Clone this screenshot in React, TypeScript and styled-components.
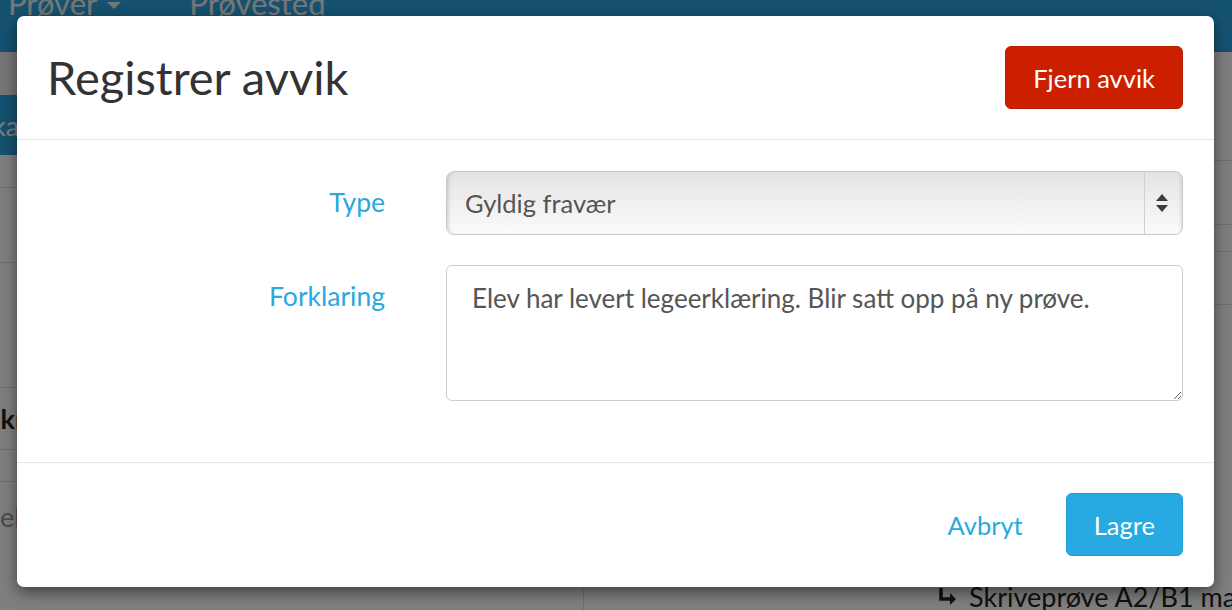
import * as React from "react";
import styled, { createGlobalStyle } from "styled-components";

const GlobalStyle = createGlobalStyle`
  html, body {
    margin: 0;
    padding: 0;
  }
  body {
    font-family: Lato, "Open Sans", "Liberation Sans", sans-serif;
    background: #fff;
    overflow: hidden;
  }
  * {
    box-sizing: border-box;
  }
`;

/* ---------- page behind the dialog ---------- */

const Page = styled.div`
  position: relative;
  width: 1232px;
  height: 610px;
  overflow: hidden;
  background: #fff;
  color: #222;
`;

const NavBar = styled.div`
  height: 52px;
  background: #2aa5e0;
  display: flex;
  align-items: flex-start;
  gap: 68px;
  padding-left: 8px;
`;

const NavItem = styled.div`
  color: #eee;
  font-size: 31px;
  line-height: 1;
  margin-top: -12px;
  display: flex;
  align-items: center;
  gap: 10px;
`;

const Caret = styled.span`
  display: inline-block;
  width: 0;
  height: 0;
  margin-top: 4px;
  border-left: 7px solid transparent;
  border-right: 7px solid transparent;
  border-top: 7px solid #eee;
`;

const Columns = styled.div`
  display: grid;
  grid-template-columns: 583px 1fr;
`;

const Column = styled.div<{ $divider?: boolean }>`
  display: flex;
  flex-direction: column;
  border-left: ${(p) => (p.$divider ? "1px solid #ddd" : "none")};
`;

const BgRow = styled.div<{ $h?: number }>`
  height: ${(p) => (p.$h ? `${p.$h}px` : "auto")};
  border-bottom: 1px solid #ddd;
  display: flex;
  align-items: center;
  font-size: 27px;
  white-space: nowrap;
  overflow: hidden;
`;

const Toolbar = styled.div`
  height: 136px;
  padding-top: 43px;
  border-bottom: 1px solid #ddd;
  background: linear-gradient(#eee 0, #eee 43px, #fff 43px);
`;

const ToolButton = styled.div`
  height: 60px;
  width: 240px;
  background: #2aa5e0;
  color: #fff;
  font-size: 27px;
  display: flex;
  align-items: center;
  text-indent: -8px;
  white-space: nowrap;
  overflow: hidden;
`;

const BoldCut = styled.span`
  font-weight: 700;
  margin-left: -14px;
`;

const Placeholder = styled.div`
  font-size: 27px;
  color: #999;
  padding-top: 18px;
  white-space: nowrap;
`;

const TaskLine = styled.div`
  padding: 275px 0 0 354px;
  font-size: 27px;
  font-weight: 400;
  white-space: nowrap;
  display: flex;
  align-items: center;
  gap: 11px;
`;

/* ---------- dialog ---------- */

const Overlay = styled.div`
  position: absolute;
  inset: 0;
  background: rgba(0, 0, 0, 0.5);
  display: flex;
  justify-content: center;
  align-items: flex-start;
  padding-top: 16px;
`;

const Modal = styled.div`
  width: 1197px;
  margin-left: -1px;
  background: #fff;
  border-radius: 7px;
  box-shadow: 0 5px 15px rgba(0, 0, 0, 0.5);
  display: flex;
  flex-direction: column;
`;

const Header = styled.div`
  display: flex;
  align-items: center;
  justify-content: space-between;
  padding: 30px 31px 30px 30px;
  border-bottom: 1px solid #e5e5e5;
`;

const Title = styled.h4`
  margin: 0;
  font-size: 47px;
  font-weight: 400;
  line-height: 1.1;
  color: #333;
`;

type Variant = "danger" | "primary" | "link";

const Button = styled.button<{ $variant: Variant }>`
  height: 63px;
  padding: 0 27px;
  font-family: inherit;
  font-size: 25.5px;
  border-radius: 6px;
  border: 1px solid transparent;
  cursor: pointer;
  color: ${(p) => (p.$variant === "link" ? "#2aa8df" : "#fff")};
  background: ${(p) =>
    p.$variant === "danger" ? "#cc1f00" : p.$variant === "primary" ? "#27a9e1" : "transparent"};
  border-color: ${(p) =>
    p.$variant === "danger" ? "#b81c00" : p.$variant === "primary" ? "#1f9dd5" : "transparent"};
`;

const Body = styled.div`
  display: grid;
  grid-template-columns: 337px 1fr;
  column-gap: 61px;
  row-gap: 30px;
  padding: 31px 31px 61px 31px;
  border-bottom: 1px solid #e5e5e5;
`;

const Label = styled.label`
  text-align: right;
  font-size: 26.5px;
  line-height: 1.43;
  padding-top: 13px;
  color: #2aa8df;
`;

const Select = styled.div`
  height: 64px;
  display: flex;
  border: 1px solid #c9c9c9;
  border-radius: 8px;
  background: linear-gradient(#e4e4e4, #fbfbfb);
  box-shadow: inset 4px 0 4px -3px rgba(0, 0, 0, 0.18);
  overflow: hidden;
`;

const SelectValue = styled.div`
  flex: 1;
  display: flex;
  align-items: center;
  padding-left: 18px;
  font-size: 25.5px;
  color: #555;
`;

const SelectArrows = styled.div`
  width: 38px;
  border-left: 1px solid #d0d0d0;
  display: flex;
  align-items: center;
  justify-content: center;
  padding-right: 3px;
  box-shadow: inset -4px 0 4px -3px rgba(0, 0, 0, 0.12);
`;

const TextArea = styled.textarea`
  height: 136px;
  width: 100%;
  resize: vertical;
  padding: 14px 25px;
  border: 1px solid #ccc;
  border-radius: 6px;
  font-family: inherit;
  font-size: 26px;
  line-height: 1.43;
  color: #555;
  outline: none;
`;

const Footer = styled.div`
  display: flex;
  justify-content: flex-end;
  align-items: center;
  gap: 15px;
  padding: 30px 31px 31px 31px;
`;

const UpDown = () => (
  <svg width="14" height="20" viewBox="0 0 14 20">
    <path d="M7 1 L13 8 L1 8 Z" fill="#3c3c3c" />
    <path d="M1 12 L13 12 L7 19 Z" fill="#3c3c3c" />
  </svg>
);

const CornerArrow = () => (
  <svg width="20" height="20" viewBox="0 0 20 20">
    <path d="M3 1 V12 H14" stroke="#222" strokeWidth="3.5" fill="none" />
    <path d="M12 6 L18 12 L12 18 Z" fill="#222" />
  </svg>
);

export default function App() {
  return (
    <Page>
      <GlobalStyle />
      <NavBar>
        <NavItem>
          Prøver <Caret />
        </NavItem>
        <NavItem>Prøvested</NavItem>
      </NavBar>
      <Columns>
        <Column>
          <Toolbar>
            <ToolButton>kandidater</ToolButton>
          </Toolbar>
          <BgRow $h={75} />
          <BgRow $h={125} />
          <BgRow $h={62}>
            <BoldCut>Skriftlig</BoldCut>
          </BgRow>
          <BgRow $h={32} />
          <Placeholder>elevens kommentar</Placeholder>
        </Column>
        <Column $divider>
          <BgRow $h={109} />
          <BgRow $h={64} />
          <BgRow $h={27} />
          <BgRow $h={53} />
          <TaskLine>
            <CornerArrow />
            Skriveprøve A2/B1 mai
          </TaskLine>
        </Column>
      </Columns>

      <Overlay>
        <Modal>
          <Header>
            <Title>Registrer avvik</Title>
            <Button $variant="danger">Fjern avvik</Button>
          </Header>
          <Body>
            <Label>Type</Label>
            <Select>
              <SelectValue>Gyldig fravær</SelectValue>
              <SelectArrows>
                <UpDown />
              </SelectArrows>
            </Select>
            <Label>Forklaring</Label>
            <TextArea
              readOnly
              defaultValue="Elev har levert legeerklæring. Blir satt opp på ny prøve."
            />
          </Body>
          <Footer>
            <Button $variant="link">Avbryt</Button>
            <Button $variant="primary">Lagre</Button>
          </Footer>
        </Modal>
      </Overlay>
    </Page>
  );
}
